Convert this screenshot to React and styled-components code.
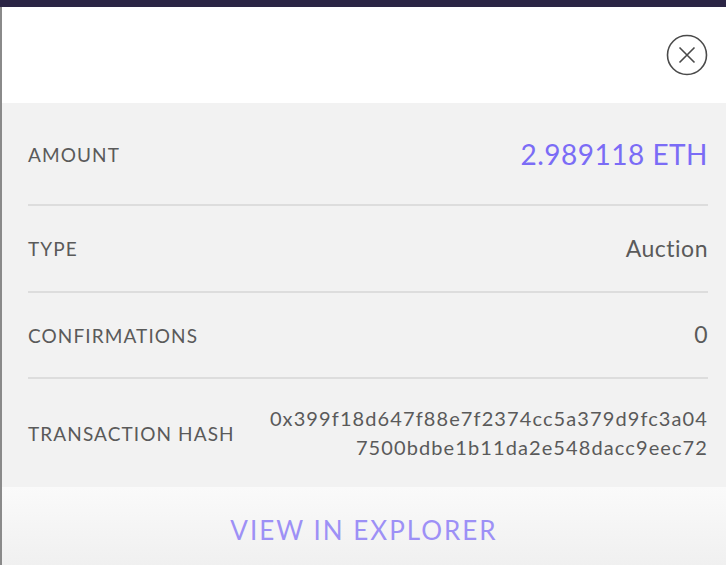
import React from "react";
import styled, { createGlobalStyle } from "styled-components";

const Global = createGlobalStyle`
  html, body { margin: 0; padding: 0; background: #ffffff; }
  body { font-family: Lato, "Open Sans", sans-serif; }
`;

const Page = styled.div`
  width: 726px;
  height: 565px;
  display: flex;
  flex-direction: column;
  overflow: hidden;
  background: #2b2545;
`;

const TopBar = styled.div`
  height: 7px;
  flex: none;
  background: #2b2545;
`;

const Modal = styled.div`
  flex: 1;
  display: flex;
  flex-direction: column;
  background: #ffffff;
  border-left: 2px solid #8a8a8a;
`;

const Header = styled.div`
  height: 96px;
  flex: none;
  display: flex;
  align-items: center;
  justify-content: flex-end;
  padding-right: 18px;
  background: #ffffff;
`;

const CloseButton = styled.button`
  width: 42px;
  height: 42px;
  padding: 0;
  border: none;
  background: transparent;
  cursor: pointer;
  display: flex;
  align-items: center;
  justify-content: center;
`;

const Body = styled.div`
  background: #f2f2f2;
  padding: 2px 18px 0 26px;
  display: flex;
  flex-direction: column;
`;

const Row = styled.div`
  height: ${(p) => p.$h}px;
  display: flex;
  align-items: center;
  justify-content: space-between;
  border-bottom: ${(p) => (p.$last ? "none" : "2px solid #dddddd")};
  box-sizing: border-box;
`;

const Label = styled.div`
  font-size: 19px;
  color: #5a5a5a;
  letter-spacing: 1.1px;
  text-transform: uppercase;
`;

const Value = styled.div`
  font-size: ${(p) => p.$size || 23}px;
  letter-spacing: ${(p) => p.$ls ?? 0.5}px;
  color: ${(p) => p.$color || "#5a5a5a"};
  text-align: right;
  line-height: 1.45;
`;

const Footer = styled.div`
  flex: 1;
  display: flex;
  align-items: center;
  justify-content: center;
  background: linear-gradient(#fafafa, #f0f0f0);
`;

const ExplorerLink = styled.a`
  font-size: 26px;
  letter-spacing: 2px;
  color: #9d90f6;
  text-decoration: none;
  text-transform: uppercase;
  margin-top: 8px;
`;

export default function App() {
  return (
    <Page>
      <Global />
      <TopBar />
      <Modal>
        <Header>
          <CloseButton aria-label="close">
            <svg width="42" height="42" viewBox="0 0 42 42">
              <circle cx="21" cy="21" r="19.5" fill="none" stroke="#4a4a4a" strokeWidth="1.6" />
              <path d="M13.5 13.5 L28.5 28.5 M28.5 13.5 L13.5 28.5" stroke="#4a4a4a" strokeWidth="1.6" />
            </svg>
          </CloseButton>
        </Header>
        <Body>
          <Row $h={101}>
            <Label>Amount</Label>
            <Value $size={28} $color="#7b6cf6">2.989118 ETH</Value>
          </Row>
          <Row $h={87}>
            <Label>Type</Label>
            <Value>Auction</Value>
          </Row>
          <Row $h={86}>
            <Label>Confirmations</Label>
            <Value>0</Value>
          </Row>
          <Row $h={108} $last>
            <Label>Transaction Hash</Label>
            <Value $size={20} $ls={1.1}>
              0x399f18d647f88e7f2374cc5a379d9fc3a04
              <br />
              7500bdbe1b11da2e548dacc9eec72
            </Value>
          </Row>
        </Body>
        <Footer>
          <ExplorerLink href="#">View in Explorer</ExplorerLink>
        </Footer>
      </Modal>
    </Page>
  );
}
